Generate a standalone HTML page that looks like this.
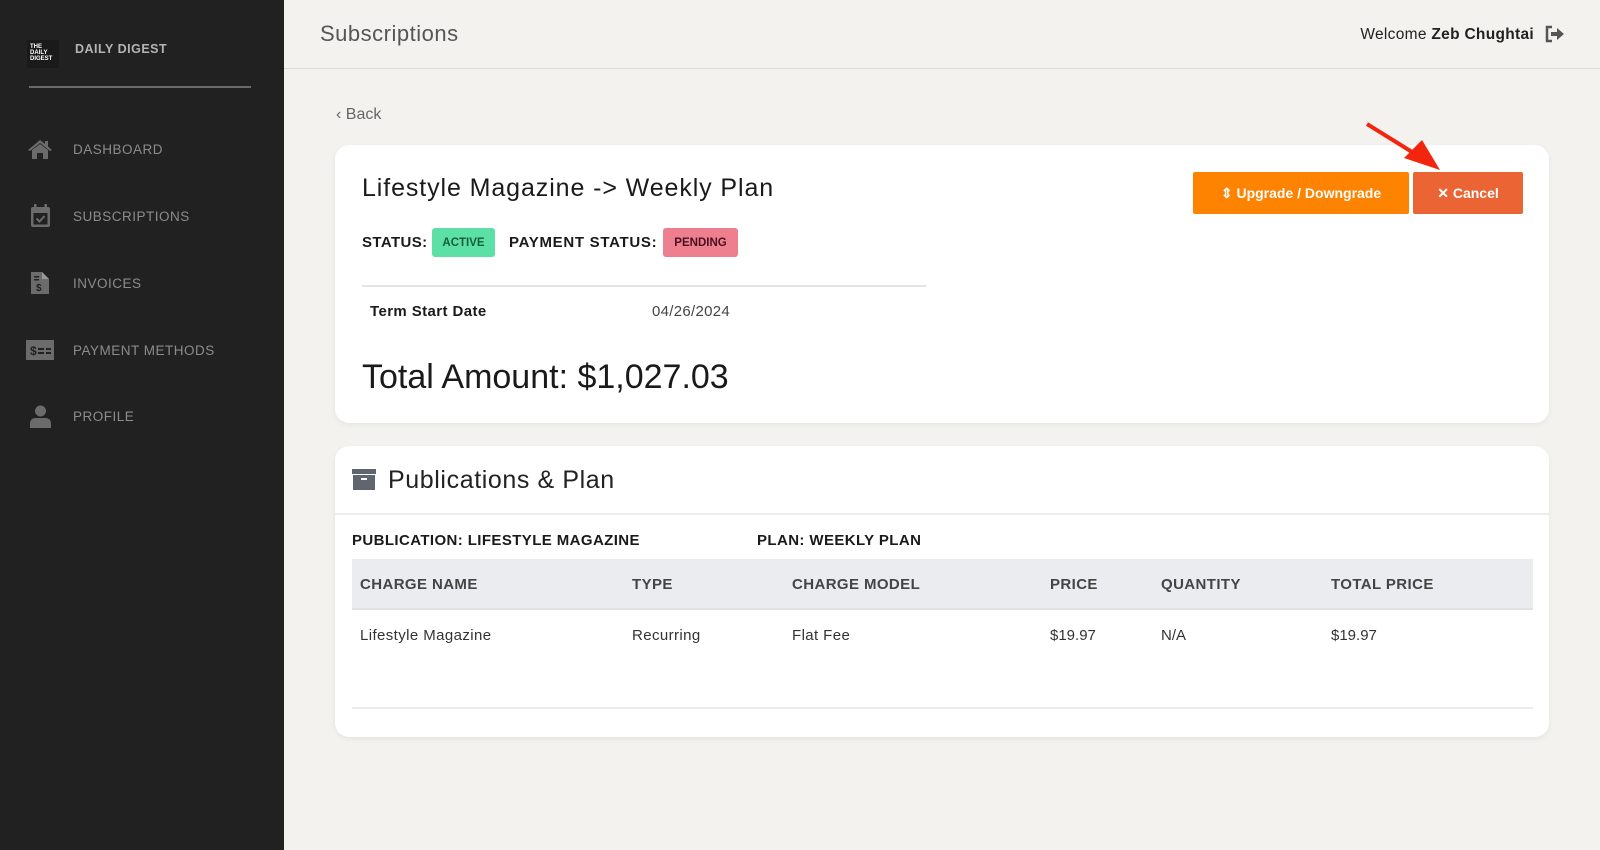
<!DOCTYPE html>
<html><head><meta charset="utf-8"><style>
*{margin:0;padding:0;box-sizing:border-box}
body{width:1600px;height:850px;background:#f3f2ef;font-family:"Liberation Sans",sans-serif;position:relative;overflow:hidden;color:#1a1a1a}
.a{position:absolute;white-space:nowrap}
.side{position:absolute;left:0;top:0;width:284px;height:850px;background:#212121}
.nav{color:#8c8c8c;font-size:13.5px;letter-spacing:.5px}
.card{position:absolute;background:#fff;border-radius:14px;box-shadow:0 2px 6px rgba(0,0,0,.06)}
.b{font-weight:bold}
.ls{letter-spacing:.4px}
</style></head><body>
<div class="side">
  <div class="a" style="left:27px;top:40px;width:32px;height:28px;background:#1a1a1a;color:#fff;font-size:6px;font-weight:bold;line-height:6px;padding:4px 3px">THE<br>DAILY<br>DIGEST</div>
  <div class="a b" style="left:75px;top:42px;color:#b4b4b4;font-size:12.5px;letter-spacing:.5px">DAILY DIGEST</div>
  <div class="a" style="left:29px;top:86px;width:222px;height:2px;background:#6a6a6a"></div>
  <svg class="a" style="left:27px;top:138px" width="26" height="22" viewBox="0 0 26 22"><path d="M13 2 L1 12 L3 13 L13 5 L23 13 L25 12 L21 8.5 V3 H18 V6 Z M5 12 V21 H10 V15 H16 V21 H21 V12 L13 6 Z" fill="#6b6b6b"/></svg>
  <div class="a nav" style="left:73px;top:142px">DASHBOARD</div>
  <svg class="a" style="left:30px;top:204px" width="21" height="24" viewBox="0 0 21 24"><rect x="1" y="3" width="19" height="20" rx="2" fill="#6b6b6b"/><rect x="3.5" y="9" width="14" height="11.5" fill="#212121"/><rect x="4" y="0" width="2.5" height="5" fill="#6b6b6b"/><rect x="14.5" y="0" width="2.5" height="5" fill="#6b6b6b"/><path d="M6.5 14.5 l3 3 l5-5.5" stroke="#6b6b6b" stroke-width="2" fill="none"/></svg>
  <div class="a nav" style="left:73px;top:209px">SUBSCRIPTIONS</div>
  <svg class="a" style="left:31px;top:271px" width="18" height="24" viewBox="0 0 18 24"><path d="M0 1 H11 L18 8 V23 H0 Z" fill="#6b6b6b"/><path d="M11 1 V8 H18" fill="#999"/><text x="5" y="20" font-size="10" font-weight="bold" fill="#212121" font-family="Liberation Sans">$</text><rect x="3" y="5" width="5" height="1.5" fill="#212121"/><rect x="3" y="8" width="5" height="1.5" fill="#212121"/></svg>
  <div class="a nav" style="left:73px;top:276px">INVOICES</div>
  <svg class="a" style="left:26px;top:340px" width="28" height="20" viewBox="0 0 28 20"><rect width="28" height="20" fill="#6b6b6b"/><text x="4" y="15" font-size="12" font-weight="bold" fill="#212121" font-family="Liberation Sans">$</text><rect x="12" y="8" width="6" height="2" fill="#212121"/><rect x="20" y="8" width="5" height="2" fill="#212121"/><rect x="12" y="12" width="6" height="2" fill="#212121"/><rect x="20" y="12" width="5" height="2" fill="#212121"/></svg>
  <div class="a nav" style="left:73px;top:343px">PAYMENT METHODS</div>
  <svg class="a" style="left:30px;top:405px" width="21" height="23" viewBox="0 0 21 23"><circle cx="10.5" cy="6" r="5.5" fill="#6b6b6b"/><path d="M0 23 V19 Q0 13 6 13 H15 Q21 13 21 19 V23 Z" fill="#6b6b6b"/></svg>
  <div class="a nav" style="left:73px;top:409px">PROFILE</div>
</div>
<div class="a" style="left:284px;top:68px;width:1316px;height:1px;background:#dcdbd8"></div>
<div class="a" style="left:320px;top:21px;font-size:22px;color:#555;letter-spacing:.5px">Subscriptions</div>
<div class="a" style="right:66px;top:26px;font-size:15.5px;color:#222;letter-spacing:.3px">Welcome <b>Zeb Chughtai</b></div>
<svg class="a" style="left:1544px;top:25px" width="24" height="18" viewBox="0 0 24 18"><path d="M8 2 H3 V16 H8" stroke="#555" stroke-width="2.5" fill="none"/><path d="M7 7 H13 V3 L20 9 L13 15 V11 H7 Z" fill="#555"/></svg>
<div class="a" style="left:336px;top:106px;font-size:16px;color:#666">‹ Back</div>

<div class="card" style="left:335px;top:145px;width:1214px;height:278px">
  <div class="a" style="left:27px;top:29px;font-size:25px;color:#1a1a1a;letter-spacing:.9px">Lifestyle Magazine -&gt; Weekly Plan</div>
  <div class="a b ls" style="left:27px;top:89px;font-size:15px">STATUS:</div>
  <div class="a b" style="left:97px;top:83px;width:63px;height:29px;background:#5de0a6;border-radius:3px;font-size:11.5px;line-height:30px;text-align:center;color:#135e3b">ACTIVE</div>
  <div class="a b ls" style="left:174px;top:89px;font-size:15px;letter-spacing:.7px">PAYMENT STATUS:</div>
  <div class="a b" style="left:328px;top:83px;width:75px;height:29px;background:#ee7f8e;border-radius:3px;font-size:11.5px;line-height:30px;text-align:center;color:#4a1020">PENDING</div>
  <div class="a" style="left:27px;top:140px;width:564px;height:2px;background:#e4e4e4"></div>
  <div class="a b ls" style="left:35px;top:158px;font-size:15px">Term Start Date</div>
  <div class="a" style="left:317px;top:158px;font-size:15px;color:#444;letter-spacing:.3px">04/26/2024</div>
  <div class="a" style="left:27px;top:213px;font-size:34px;color:#1a1a1a">Total Amount: $1,027.03</div>
  <div class="a b" style="left:858px;top:27px;width:216px;height:42px;background:#fd8300;border-radius:2px;color:#fff;font-size:14px;line-height:42px;text-align:center">⇕ Upgrade / Downgrade</div>
  <div class="a b" style="left:1078px;top:27px;width:110px;height:42px;background:#ea6434;border-radius:2px;color:#fff;font-size:14px;line-height:42px;text-align:center">✕ Cancel</div>
</div>
<svg class="a" style="left:1360px;top:118px" width="82" height="54" viewBox="0 0 82 54"><path d="M7 6 L52 34" stroke="#f2250f" stroke-width="4"/><path d="M44 40 L80 52 L62 22 Z" fill="#f2250f"/></svg>

<div class="card" style="left:335px;top:446px;width:1214px;height:291px">
  <svg class="a" style="left:17px;top:23px" width="24" height="21" viewBox="0 0 24 21"><rect width="24" height="5" fill="#5f6670"/><rect x="1" y="6" width="22" height="15" fill="#5f6670"/><rect x="9" y="9" width="6" height="2" fill="#fff"/></svg>
  <div class="a" style="left:53px;top:20px;font-size:25px;color:#222;letter-spacing:.6px">Publications &amp; Plan</div>
  <div class="a" style="left:0;top:67px;width:1214px;height:2px;background:#ececec"></div>
  <div class="a b ls" style="left:17px;top:86px;font-size:15px">PUBLICATION: LIFESTYLE MAGAZINE</div>
  <div class="a b ls" style="left:422px;top:86px;font-size:15px">PLAN: WEEKLY PLAN</div>
  <div class="a" style="left:17px;top:113px;width:1181px;height:51px;background:#ebecef;border-bottom:2px solid #e0e2e6"></div>
  <div class="a b ls" style="left:25px;top:130px;font-size:15px;color:#444">CHARGE NAME</div>
  <div class="a b ls" style="left:297px;top:130px;font-size:15px;color:#444">TYPE</div>
  <div class="a b ls" style="left:457px;top:130px;font-size:15px;color:#444">CHARGE MODEL</div>
  <div class="a b ls" style="left:715px;top:130px;font-size:15px;color:#444">PRICE</div>
  <div class="a b ls" style="left:826px;top:130px;font-size:15px;color:#444">QUANTITY</div>
  <div class="a b ls" style="left:996px;top:130px;font-size:15px;color:#444">TOTAL PRICE</div>
  <div class="a ls" style="left:25px;top:181px;font-size:15px;color:#333">Lifestyle Magazine</div>
  <div class="a ls" style="left:297px;top:181px;font-size:15px;color:#333">Recurring</div>
  <div class="a ls" style="left:457px;top:181px;font-size:15px;color:#333">Flat Fee</div>
  <div class="a" style="left:715px;top:181px;font-size:15px;color:#333">$19.97</div>
  <div class="a" style="left:826px;top:181px;font-size:15px;color:#333">N/A</div>
  <div class="a" style="left:996px;top:181px;font-size:15px;color:#333">$19.97</div>
  <div class="a" style="left:17px;top:261px;width:1181px;height:2px;background:#ececec"></div>
</div>
</body></html>
